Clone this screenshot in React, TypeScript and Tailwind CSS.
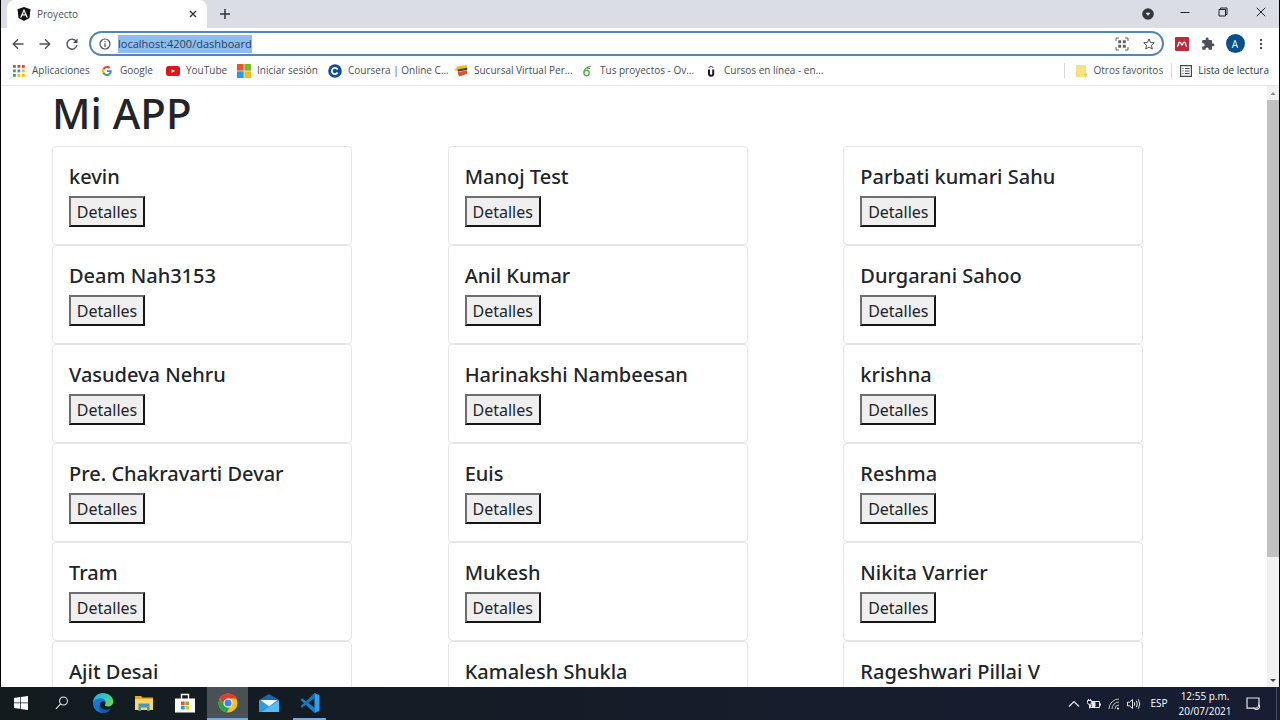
import type { ReactNode } from 'react'

type Bookmark = { label: string; width: string; icon: ReactNode }

const names = [
  'kevin',
  'Manoj Test',
  'Parbati kumari Sahu',
  'Deam Nah3153',
  'Anil Kumar',
  'Durgarani Sahoo',
  'Vasudeva Nehru',
  'Harinakshi Nambeesan',
  'krishna',
  'Pre. Chakravarti Devar',
  'Euis',
  'Reshma',
  'Tram',
  'Mukesh',
  'Nikita Varrier',
  'Ajit Desai',
  'Kamalesh Shukla',
  'Rageshwari Pillai V',
]

function AngularIcon() {
  return (
    <svg viewBox="0 0 14 14" className="size-3.5 shrink-0">
      <path d="M7 0l6.5 2.3-1 8.6L7 14l-5.500-3.100-1-8.600z" fill="#111" />
      <path d="M7 1.800L3.100 10.500h1.500l.8-2h3.200l.8 2h1.500zM7 4.600l1.100 2.700H5.900z" fill="#fff" />
    </svg>
  )
}

function AppsIcon() {
  const dots = ['#e94235', '#e94235', '#e94235', '#34a853', '#4285f4', '#fbbc05', '#34a853', '#fbbc05', '#fbbc05']
  return (
    <svg viewBox="0 0 12 12" className="size-3">
      {dots.map((fill, i) => (
        <rect key={i} x={(i % 3) * 4.500} y={Math.floor(i / 3) * 4.500} width="2.800" height="2.800" fill={fill} />
      ))}
    </svg>
  )
}

function GoogleIcon() {
  return (
    <svg viewBox="0 0 48 48" className="size-2.5">
      <path fill="#EA4335" d="M24 9.500c3.540 0 6.710 1.220 9.210 3.600l6.850-6.850C35.900 2.380 30.470 0 24 0 14.620 0 6.510 5.380 2.560 13.220l7.980 6.190C12.430 13.720 17.740 9.500 24 9.500z" />
      <path fill="#4285F4" d="M46.980 24.550c0-1.570-.15-3.090-.38-4.550H24v9.020h12.940c-.58 2.960-2.260 5.480-4.780 7.180l7.730 6c4.510-4.180 7.090-10.360 7.090-17.650z" />
      <path fill="#FBBC05" d="M10.530 28.590c-.48-1.450-.76-2.990-.76-4.590s.27-3.140.76-4.590l-7.980-6.190C.92 16.460 0 20.120 0 24c0 3.880.92 7.540 2.560 10.780l7.970-6.190z" />
      <path fill="#34A853" d="M24 48c6.480 0 11.930-2.130 15.890-5.810l-7.730-6c-2.150 1.450-4.920 2.300-8.160 2.300-6.260 0-11.570-4.220-13.470-9.910l-7.980 6.190C6.510 42.620 14.620 48 24 48z" />
    </svg>
  )
}

function YouTubeIcon() {
  return (
    <svg viewBox="0 0 14 10" className="h-2.5 w-3.5">
      <rect width="14" height="10" rx="2.500" fill="#e6121b" />
      <path d="M5.500 3v4L9 5z" fill="#fff" />
    </svg>
  )
}

function MicrosoftIcon() {
  return (
    <svg viewBox="0 0 14 14" className="size-3.5">
      <path fill="#e8572a" d="M0 0h6.700v6.700H0z" />
      <path fill="#7db82c" d="M7.300 0H14v6.700H7.300z" />
      <path fill="#1da1e6" d="M0 7.300h6.700V14H0z" />
      <path fill="#f9b916" d="M7.300 7.300H14V14H7.300z" />
    </svg>
  )
}

function CourseraIcon() {
  return (
    <svg viewBox="0 0 14 14" className="size-3.5">
      <circle cx="7" cy="7" r="6.800" fill="#124a9e" />
      <path d="M9.600 5.400A3.100 3.100 0 1 0 9.600 8.600" fill="none" stroke="#fff" strokeWidth="1.900" />
    </svg>
  )
}

function BankIcon() {
  return (
    <svg viewBox="0 0 14 12" className="h-3 w-3.5">
      <path d="M0 5l3.500-3 1 4.500z" fill="#f7c51e" />
      <path d="M2.500 1.500L12.500 0l.8 3-9.800 2z" fill="#f2b91d" />
      <path d="M3.500 4.500l9.500-1.800.4 2L4 6.700z" fill="#2d4a3a" />
      <path d="M3.500 7.200l9.500-2 .3 3.600L5 11.600z" fill="#e2502c" />
    </svg>
  )
}

function OverleafIcon() {
  return (
    <svg viewBox="0 0 12 14" className="h-3 w-2.5" fill="none" stroke="#4fa744" strokeWidth="1.500">
      <path d="M10.500 1.500C6.500 1.500 2.300 4.500 2.300 9" />
      <circle cx="5.500" cy="9.500" r="3.200" />
      <path d="M5.500 4.500l4-.7" />
    </svg>
  )
}

function UdemyIcon() {
  return (
    <svg viewBox="0 0 12 12" className="size-3" fill="none">
      <path d="M3.500 2.800L6 1.300l2.500 1.500" stroke="#8a55d6" strokeWidth="1.200" />
      <path d="M4 4.500v4.200c0 2.600 4.200 2.600 4.200 0V4.500" stroke="#1b1b28" strokeWidth="2" />
    </svg>
  )
}

const bookmarks: Bookmark[] = [
  { label: 'Aplicaciones', width: 'w-[88px]', icon: <AppsIcon /> },
  { label: 'Google', width: 'w-[66px]', icon: <GoogleIcon /> },
  { label: 'YouTube', width: 'w-[71px]', icon: <YouTubeIcon /> },
  { label: 'Iniciar sesión', width: 'w-[91px]', icon: <MicrosoftIcon /> },
  { label: 'Coursera | Online C...', width: 'w-[126px]', icon: <CourseraIcon /> },
  { label: 'Sucursal Virtual Per...', width: 'w-[126px]', icon: <BankIcon /> },
  { label: 'Tus proyectos - Ov...', width: 'w-[124px]', icon: <OverleafIcon /> },
  { label: 'Cursos en línea - en...', width: 'w-[124px]', icon: <UdemyIcon /> },
]

function IconButton({ label, className = '', children }: { label: string; className?: string; children: ReactNode }) {
  return (
    <button type="button" aria-label={label} className={`flex shrink-0 items-center justify-center ${className}`}>
      {children}
    </button>
  )
}

function TabStrip() {
  return (
    <div className="flex h-7 shrink-0 items-stretch bg-[#dadde5]">
      <div className="ml-1.5 flex w-50 items-center rounded-t-lg bg-white pr-[7px] pl-2.5">
        <AngularIcon />
        <span className="ml-1.5 flex-1 text-[10px] text-[#4b4e52]">Proyecto</span>
        <IconButton label="Cerrar pestaña" className="size-3.5">
          <svg viewBox="0 0 10 10" className="size-2.5" stroke="#333" strokeWidth="1.400">
            <path d="M2 2l6 6M8 2l-6 6" />
          </svg>
        </IconButton>
      </div>
      <IconButton label="Nueva pestaña" className="ml-2 w-5">
        <svg viewBox="0 0 12 12" className="size-3" stroke="#333" strokeWidth="1.500">
          <path d="M6 1v10M1 6h10" />
        </svg>
      </IconButton>
      <div className="flex-1" />
      <IconButton label="Buscar pestañas" className="w-9">
        <svg viewBox="0 0 12 12" className="size-3">
          <circle cx="6" cy="6" r="5.800" fill="#33373b" />
          <path d="M3.600 4.700h4.800L6 7.800z" fill="#e8eaed" />
        </svg>
      </IconButton>
      <IconButton label="Minimizar" className="w-[38px] pb-1">
        <svg viewBox="0 0 10 10" className="size-2.5" stroke="#222">
          <path d="M.5 5.500h9" />
        </svg>
      </IconButton>
      <IconButton label="Restaurar" className="w-[38px] pb-1">
        <svg viewBox="0 0 10 10" className="size-2.5" fill="none" stroke="#222">
          <path d="M1 2.500h6.500V9H1zM2.500 2.500V1H9v6.500H7.500" />
        </svg>
      </IconButton>
      <IconButton label="Cerrar" className="w-[37px] pb-1">
        <svg viewBox="0 0 10 10" className="size-2.5" stroke="#222">
          <path d="M.8.800l8.400 8.400M9.200.800L.8 9.200" />
        </svg>
      </IconButton>
    </div>
  )
}

function Toolbar() {
  return (
    <div className="flex h-[31px] shrink-0 items-center bg-white pr-1.5 pl-[3px]">
      <IconButton label="Atrás" className="w-[27px]">
        <svg viewBox="0 0 12 12" className="size-3" fill="none" stroke="#4d5156" strokeWidth="1.300">
          <path d="M11.500 6H1.200M6 1.200L1.200 6 6 10.800" />
        </svg>
      </IconButton>
      <IconButton label="Adelante" className="w-[27px]">
        <svg viewBox="0 0 12 12" className="size-3" fill="none" stroke="#4d5156" strokeWidth="1.300">
          <path d="M.5 6h10.300M6 1.200L10.800 6 6 10.800" />
        </svg>
      </IconButton>
      <IconButton label="Recargar" className="w-[27px]">
        <svg viewBox="0 0 12 12" className="size-3" fill="none" stroke="#4d5156" strokeWidth="1.400">
          <path d="M10.300 3.500A5 5 0 1 0 11 7" />
          <path d="M11.500.5v4.500H7z" fill="#4d5156" stroke="none" />
        </svg>
      </IconButton>
      <div className="ml-1 flex h-[25px] flex-1 items-center rounded-full border-2 border-[#4f86bd] bg-white px-2">
        <svg viewBox="0 0 12 12" className="size-3 shrink-0" fill="none" stroke="#4d5156" strokeWidth="1.200">
          <circle cx="6" cy="6" r="5" />
          <path d="M6 5.300V9M6 3v1.300" />
        </svg>
        <input
          type="text"
          aria-label="Dirección"
          defaultValue="localhost:4200/dashboard"
          className="ml-[7px] field-sizing-content h-[18px] bg-[#90bdf0] text-[11px] text-[#27415f] outline-none"
        />
        <div className="flex-1" />
        <IconButton label="Código QR" className="w-[27px]">
          <svg viewBox="0 0 14 14" className="size-3.5" fill="none" stroke="#5f6368">
            <path d="M1 4V1h3M10 1h3v3M13 10v3h-3M4 13H1v-3" />
            <path d="M3.200 3.200h3v3h-3zM7.800 3.200h3v3h-3zM3.200 7.800h3v3h-3zM7.800 7.800h3v3h-3z" fill="#5f6368" stroke="none" />
          </svg>
        </IconButton>
        <IconButton label="Añadir a favoritos" className="-mr-2 w-[27px]">
          <svg viewBox="0 0 12 12" className="size-3" fill="none" stroke="#4d5156" strokeLinejoin="round">
            <path d="M6 .9l1.500 3.500 3.800.4-2.900 2.500.9 3.700L6 9.100 2.700 11l.9-3.700L.7 4.800l3.800-.4z" />
          </svg>
        </IconButton>
      </div>
      <IconButton label="Mendeley" className="ml-1 w-[27px]">
        <svg viewBox="0 0 14 14" className="size-3.5">
          <rect width="14" height="14" rx="1" fill="#c3273b" />
          <path d="M2 9.500C4 9 3 5.200 4.600 5.200S6 8 7 8s.8-2.800 2.400-2.800S10 9 12 9.500" fill="none" stroke="#fff" strokeWidth="1.300" />
        </svg>
      </IconButton>
      <IconButton label="Extensiones" className="w-[26px]">
        <svg viewBox="0 0 24 24" className="size-3.5" fill="#4d5156">
          <path d="M20.500 11H19V7c0-1.100-.9-2-2-2h-4V3.500a2.500 2.500 0 0 0-5 0V5H4c-1.100 0-2 .9-2 2v3.800h1.500a2.700 2.700 0 0 1 0 5.400H2V20c0 1.100.9 2 2 2h3.800v-1.500a2.700 2.700 0 0 1 5.400 0V22H17c1.100 0 2-.9 2-2v-4h1.500a2.500 2.500 0 0 0 0-5z" />
        </svg>
      </IconButton>
      <IconButton label="Perfil" className="w-7">
        <span className="flex size-[19px] items-center justify-center rounded-full bg-[#07508c] text-[10px] leading-none text-white">A</span>
      </IconButton>
      <IconButton label="Menú" className="w-6">
        <svg viewBox="0 0 4 12" className="h-3 w-1" fill="#4d5156">
          <circle cx="2" cy="2" r="1.200" />
          <circle cx="2" cy="6" r="1.200" />
          <circle cx="2" cy="10" r="1.200" />
        </svg>
      </IconButton>
    </div>
  )
}

function BookmarksBar() {
  return (
    <nav className="flex h-[27px] shrink-0 items-center border-b border-[#e3e4e6] bg-white pr-2.5 pb-[3px] pl-[11px] text-[10px] whitespace-nowrap text-[#4b4e52]">
      {bookmarks.map((b) => (
        <a key={b.label} href="#" className={`flex shrink-0 items-center gap-1.5 ${b.width}`}>
          <span className="flex w-3.5 shrink-0 justify-center">{b.icon}</span>
          {b.label}
        </a>
      ))}
      <div className="flex-1" />
      <a href="#" className="flex items-center gap-1.5 border-l border-[#d5d7da] pl-2.5">
        <svg viewBox="0 0 12 12" className="size-3">
          <path d="M1 0h10v12H1z" fill="#f9e081" />
          <path d="M9 8h3v3.500H9z" fill="#f1d25f" />
        </svg>
        Otros favoritos
      </a>
      <a href="#" className="ml-2 flex items-center gap-1.5 border-l border-[#d5d7da] pl-2 text-[#33373b]">
        <svg viewBox="0 0 12 12" className="size-3" fill="none" stroke="#44474b">
          <path d="M.6.600h10.800v10.800H.6z" strokeWidth="1.200" />
          <path d="M2.500 3.500h1M5 3.500h4.500M2.500 6h1M5 6h4.500M2.500 8.500h1M5 8.500h4.500" />
        </svg>
        Lista de lectura
      </a>
    </nav>
  )
}

function UserCard({ name }: { name: string }) {
  return (
    <article className="w-[300px] rounded border border-[#e6e6e6] px-4 py-[17px]">
      <h5 className="mb-[7px] text-xl leading-[25px] font-medium whitespace-nowrap">{name}</h5>
      <button
        type="button"
        className="block h-[31px] w-[76px] border-2 border-t-[#6e6e6e] border-r-[#151515] border-b-[#151515] border-l-[#6e6e6e] bg-[#efefef] text-base leading-none"
      >
        Detalles
      </button>
    </article>
  )
}

function Scrollbar() {
  return (
    <div className="flex w-3 shrink-0 flex-col items-center bg-[#f1f1f1]">
      <svg viewBox="0 0 12 14" className="h-3.5 w-3">
        <path d="M3.500 9h5L6 6z" fill="#8a8a8a" />
      </svg>
      <div className="w-full flex-[458] bg-[#c1c1c1]" />
      <div className="flex-[116]" />
      <svg viewBox="0 0 12 14" className="h-3.5 w-3">
        <path d="M3 6h6L6 9z" fill="#404040" />
      </svg>
    </div>
  )
}

function TaskButton({ label, className = '', children }: { label: string; className?: string; children: ReactNode }) {
  return (
    <button type="button" aria-label={label} className={`flex w-[41px] items-center justify-center border-b-2 ${className || 'border-transparent'}`}>
      {children}
    </button>
  )
}

function Taskbar() {
  return (
    <footer className="flex h-[33px] shrink-0 items-stretch bg-linear-to-r from-[#121c1f] to-[#181d33] text-white">
      <TaskButton label="Inicio">
        <svg viewBox="0 0 14 14" className="size-3.5" fill="#fff">
          <path d="M0 2l6-.9v5.500H0zM6.700 1L14 0v6.600H6.700zM0 7.300h6v5.500L0 12zM6.700 7.300H14V14l-7.300-1z" />
        </svg>
      </TaskButton>
      <TaskButton label="Buscar">
        <svg viewBox="0 0 16 16" className="size-3.5" fill="none" stroke="#e8e8e8" strokeWidth="1.200">
          <circle cx="9.700" cy="5.700" r="4.500" />
          <path d="M6.500 9L1 14.800" />
        </svg>
      </TaskButton>
      <TaskButton label="Microsoft Edge">
        <svg viewBox="0 0 22 22" className="size-[22px]">
          <defs>
            <linearGradient id="edgeTop" x1="0" x2="1" y1="0" y2=".5">
              <stop offset="0" stopColor="#2ba8e8" />
              <stop offset=".5" stopColor="#2fc1d0" />
              <stop offset="1" stopColor="#62d95c" />
            </linearGradient>
          </defs>
          <path d="M1 11C1 5 5.500 1 11 1s10.200 4 10.200 8.500c0 3.500-2.500 5-5.200 5-2.300 0-3.500-.8-3-1.700 1.300-2.300.2-5-3-5C6 7.800 3 9 1 11z" fill="url(#edgeTop)" />
          <path d="M1 11c1-3 4-4.800 7.500-4.800 3 0 5 1.800 5 4-2-2-5.500-.7-5.500 2.600 0 3.800 4 6.700 9.500 5C15.500 20 13.500 21 11 21 5 21 .8 16.500 1 11z" fill="#1677cf" />
          <path d="M8 12.800c0 4 5 6.700 11 3.600C17 19.800 14 21 11 21c-3.500-1-5.500-6-3-8.200z" fill="#145aa5" />
        </svg>
      </TaskButton>
      <TaskButton label="Explorador de archivos">
        <svg viewBox="0 0 18 16" className="h-4 w-[18px]">
          <path d="M0 1h6l1.500 1.500H18v12H0z" fill="#e5a823" />
          <path d="M0 4h18v11H0z" fill="#fad667" />
          <path d="M3.500 8.500h11V16h-2.500v-3.500H6V16H3.500z" fill="#4c97ba" />
        </svg>
      </TaskButton>
      <TaskButton label="Microsoft Store">
        <svg viewBox="0 0 20 20" className="size-5">
          <path d="M6.500 6V1.500h7V6" fill="none" stroke="#fff" strokeWidth="1.400" />
          <path d="M0 5.500h20v14H0z" fill="#fff" />
          <path fill="#e8572a" d="M6 8.500h3.700v3.700H6z" />
          <path fill="#7db82c" d="M10.300 8.500H14v3.700h-3.700z" />
          <path fill="#1da1e6" d="M6 12.800h3.700v3.700H6z" />
          <path fill="#f9b916" d="M10.300 12.800H14v3.700h-3.700z" />
        </svg>
      </TaskButton>
      <TaskButton label="Google Chrome" className="ml-0.5 border-[#76a9dc] bg-[#4a5154]">
        <svg viewBox="0 0 20 20" className="size-5">
          <circle cx="10" cy="10" r="9.500" fill="#fbc116" />
          <path d="M1.800 5.200A9.500 9.500 0 0 1 18.300 5.500H10L6 12z" fill="#e33b2e" />
          <path d="M1.800 5.200L6.200 12.500 10 14.500l1.500.2-2.700 4.700A9.500 9.500 0 0 1 1.800 5.200z" fill="#2da24c" />
          <circle cx="10" cy="10" r="4.500" fill="#fff" />
          <circle cx="10" cy="10" r="3.500" fill="#4083ee" />
        </svg>
      </TaskButton>
      <TaskButton label="Correo">
        <svg viewBox="0 0 20 18" className="h-[18px] w-5">
          <path d="M0 6l10-6 10 6v3H0z" fill="#1a65ad" />
          <path d="M0 6.500h20V18H0z" fill="#2c9ce2" />
          <path d="M20 6.500V18H3z" fill="#56bdf3" />
          <path d="M1.500 6h17L10 12.500z" fill="#f3f8fc" />
        </svg>
      </TaskButton>
      <TaskButton label="Visual Studio Code" className="relative border-transparent">
        <svg viewBox="0 0 20 20" className="size-5">
          <path d="M.5 6.800l1.600-1.500L14.500 14.700V20z" fill="#1684cf" />
          <path d="M.5 13.200l1.600 1.500L14.500 5.300V0z" fill="#1173b8" />
          <path d="M14.500 0L19.500 2.300v15.400l-5 2.300z" fill="#2aa4ee" />
        </svg>
        <span className="absolute inset-x-1 -bottom-0.5 h-0.5 bg-[#76a9dc]" />
      </TaskButton>
      <div className="flex-1" />
      <div className="flex items-center pr-[3px]">
        <IconButton label="Mostrar iconos ocultos" className="w-5">
          <svg viewBox="0 0 12 12" className="size-3" fill="none" stroke="#e8e8e8" strokeWidth="1.200">
            <path d="M1 8.500l5-5 5 5" />
          </svg>
        </IconButton>
        <IconButton label="Batería" className="w-5">
          <svg viewBox="0 0 14 10" className="h-2.5 w-3.5" fill="none" stroke="#e8e8e8">
            <path d="M4 2.500h8.500v6H3.500V6M13.500 4.500v2" />
            <path d="M5 3.500h3v4H5z" fill="#e8e8e8" />
            <path d="M.5 1.500h4v2a2 2 0 0 1-4 0zM1.500 0v1.500M3.500 0v1.500M2.500 5.500v4" />
          </svg>
        </IconButton>
        <IconButton label="Red" className="w-5">
          <svg viewBox="0 0 12 12" className="size-3" fill="none" stroke="#b9bcc4">
            <path d="M1 11A10 10 0 0 1 11 1M4 11a7 7 0 0 1 7-7M7 11a4 4 0 0 1 4-4" />
            <circle cx="10" cy="10.500" r="1" fill="#fff" stroke="none" />
          </svg>
        </IconButton>
        <IconButton label="Volumen" className="w-5">
          <svg viewBox="0 0 14 12" className="h-3 w-3.5" fill="none" stroke="#e8e8e8">
            <path d="M.5 4.200h2L5.500 1.500v9L2.500 7.800h-2zM7.300 4.300q1 1.700 0 3.400M9.300 2.800q2 3.200 0 6.400M11.300 1.300q3 4.700 0 9.400" />
          </svg>
        </IconButton>
        <span className="w-[30px] text-center text-[10px]">ESP</span>
        <div className="w-[62px] text-center text-[10px] leading-[15px] whitespace-nowrap">
          <div>12:55 p.m.</div>
          <div>20/07/2021</div>
        </div>
        <IconButton label="Notificaciones" className="w-[34px]">
          <svg viewBox="0 0 14 14" className="size-3.5" fill="none" stroke="#e8e8e8" strokeWidth="1.200">
            <path d="M8 11.200H1V1h12v6.500" />
            <path d="M13 7.500a3 3 0 1 1-5 3.700A4.500 4.500 0 0 0 13 7.500z" />
          </svg>
        </IconButton>
        <div className="ml-1.5 h-[33px] w-px bg-[#4b5066]" />
      </div>
    </footer>
  )
}

export default function App() {
  return (
    <div className="flex h-screen flex-col overflow-hidden bg-black font-['Open_Sans',sans-serif] text-[#212529]">
      <div className="flex min-h-0 flex-1 flex-col px-px">
        <TabStrip />
        <Toolbar />
        <BookmarksBar />
        <div className="flex min-h-0 flex-1 bg-white">
          <main className="min-w-0 flex-1 overflow-y-auto pr-7 pl-[51px] font-['Noto_Sans',sans-serif] [scrollbar-width:none]">
            <h1 className="pt-0.5 pb-2 text-[42px] leading-[50px] font-medium">Mi APP</h1>
            <section className="grid grid-cols-3">
              {names.map((name) => (
                <UserCard key={name} name={name} />
              ))}
            </section>
          </main>
          <Scrollbar />
        </div>
      </div>
      <Taskbar />
    </div>
  )
}
